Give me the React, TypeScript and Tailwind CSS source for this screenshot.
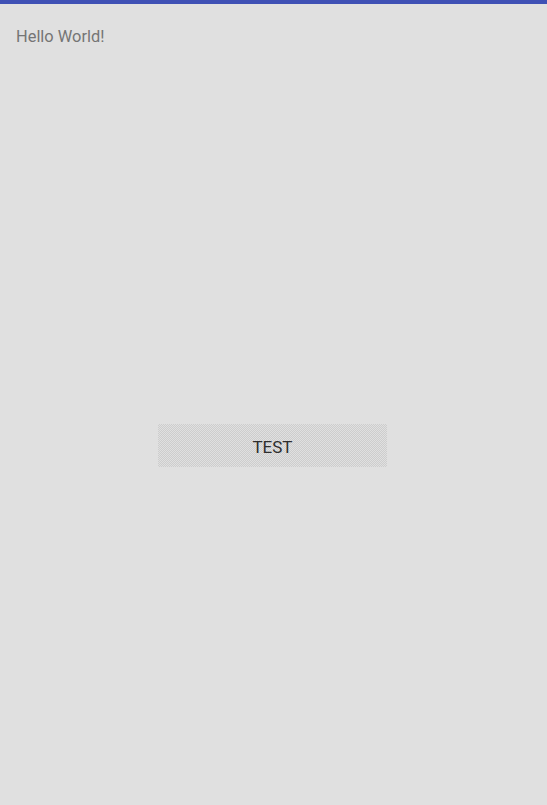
export default function App() {
  return (
    <div className="min-h-[805px] w-full bg-[#e0e0e0] font-['Roboto',sans-serif]">
      <div className="h-[4px] bg-[#3f51b5]" />
      <div className="px-4 pt-[23px]">
        <p className="text-[16.4px] leading-[19px] text-[#757575]">Hello World!</p>
      </div>
      <div className="mt-[378px] pl-[158px]">
        <button className="flex h-[43px] w-[229px] items-center justify-center bg-[repeating-conic-gradient(#cdcdcd_0_25%,#e0e0e0_0_50%)] bg-[length:2px_2px] pt-[4px] text-[17px] text-[#2e2e2e]">
          TEST
        </button>
      </div>
    </div>
  );
}
